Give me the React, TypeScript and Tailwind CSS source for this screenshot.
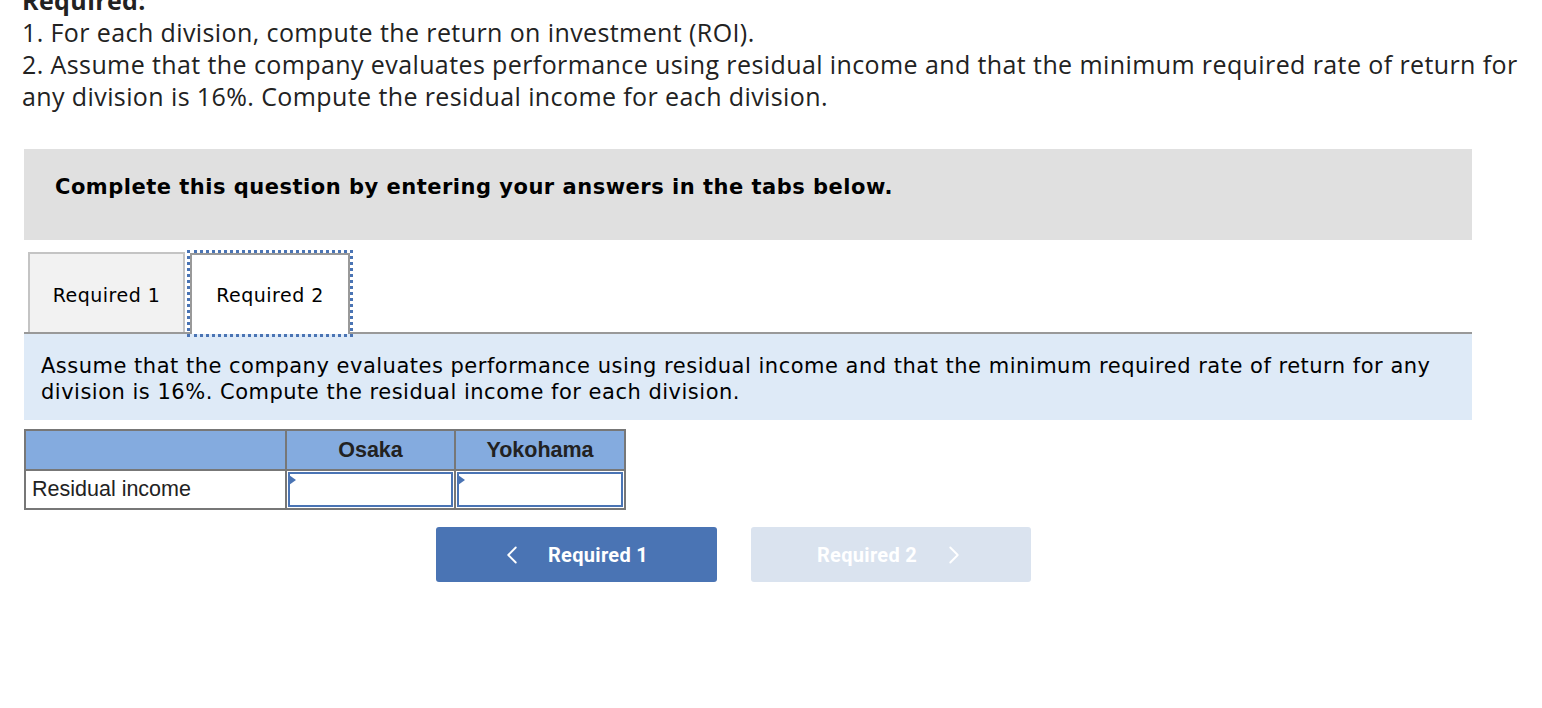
import { ChevronLeft, ChevronRight } from "lucide-react";

const verdana = "font-['DejaVu_Sans',sans-serif]";

export default function App() {
  return (
    <div className="w-[1542px] h-[708px] bg-white overflow-hidden relative">
      <div className="-mt-[16px] pl-[22px] text-[25px] leading-[32px] tracking-[0.4px] text-[#222] font-['Open_Sans',sans-serif]">
        <p className="font-bold">Required:</p>
        <p>1. For each division, compute the return on investment (ROI).</p>
        <p>
          2. Assume that the company evaluates performance using residual income and that the minimum required rate of return for
          <br />
          any division is 16%. Compute the residual income for each division.
        </p>
      </div>

      <div className="ml-[24px] w-[1448px] mt-[37px]">
        {/* instructions banner */}
        <div className={`h-[91px] bg-[#e0e0e0] flex items-center pl-[31px] ${verdana}`}>
          <h2 className="text-[21px] tracking-[0.5px] font-bold text-black -mt-[14px]">Complete this question by entering your answers in the tabs below.</h2>
        </div>

        {/* tabs */}
        <div className={`mt-[12px] flex items-end gap-[5px] pl-[4px] border-b-2 border-[#999] ${verdana}`}>
          <button className="w-[157px] h-[80px] pt-[4px] bg-[#f2f2f2] border-2 border-b-0 border-[#c4c4c4] text-[19px] tracking-[0.5px] text-black">
            Required 1
          </button>
          <button className="w-[160px] h-[81px] pt-[2px] bg-white border-2 border-b-0 border-[#999] text-[19px] tracking-[0.5px] text-black outline-dotted outline-[3px] outline-[#4a74b4] -mb-[2px]">
            Required 2
          </button>
        </div>

        {/* prompt */}
        <div className={`bg-[#deeaf7] h-[86px] pl-[17px] pt-[19px] text-[21px] leading-[26px] tracking-[0.5px] text-black ${verdana}`}>
          Assume that the company evaluates performance using residual income and that the minimum required rate of return for any
          <br />
          division is 16%. Compute the residual income for each division.
        </div>

        {/* answer table */}
        <table className="mt-[9px] border-collapse font-['Liberation_Sans','Arial',sans-serif] text-[21.5px] text-[#222]">
          <thead>
            <tr className="bg-[#84abdf] h-[40px]">
              <th className="w-[261px] border-2 border-[#777]"></th>
              <th className="w-[169px] border-2 border-[#777] font-bold">Osaka</th>
              <th className="w-[170px] border-2 border-[#777] font-bold">Yokohama</th>
            </tr>
          </thead>
          <tbody>
            <tr className="h-[39px]">
              <td className="border-2 border-[#777] pl-[6px]">Residual income</td>
              {[0, 1].map((i) => (
                <td key={i} className="border-2 border-[#777] p-0">
                  <div className="relative h-[35px] mx-[1px] border-2 border-[#4a74b4] bg-white">
                    <span className="absolute -left-[1px] top-[1px] w-0 h-0 border-y-[5px] border-y-transparent border-l-[7px] border-l-[#4a74b4]" />
                  </div>
                </td>
              ))}
            </tr>
          </tbody>
        </table>

        {/* nav buttons */}
        <div className="mt-[17px] ml-[412px] flex gap-[34px] font-['Roboto',sans-serif]">
          <button className="w-[281px] h-[55px] rounded-[3px] bg-[#4a74b4] text-white text-[20px] tracking-[0.3px] font-bold flex items-center pl-[61px]">
            <ChevronLeft className="w-[30px] h-[30px]" strokeWidth={1.5} />
            <span className="ml-[21px]">Required 1</span>
          </button>
          <button className="w-[280px] h-[55px] rounded-[3px] bg-[#dae3ef] text-white text-[20px] tracking-[0.3px] font-bold flex items-center pl-[66px]">
            <span>Required 2</span>
            <ChevronRight className="ml-[22px] w-[30px] h-[30px]" strokeWidth={1.5} />
          </button>
        </div>
      </div>
    </div>
  );
}
